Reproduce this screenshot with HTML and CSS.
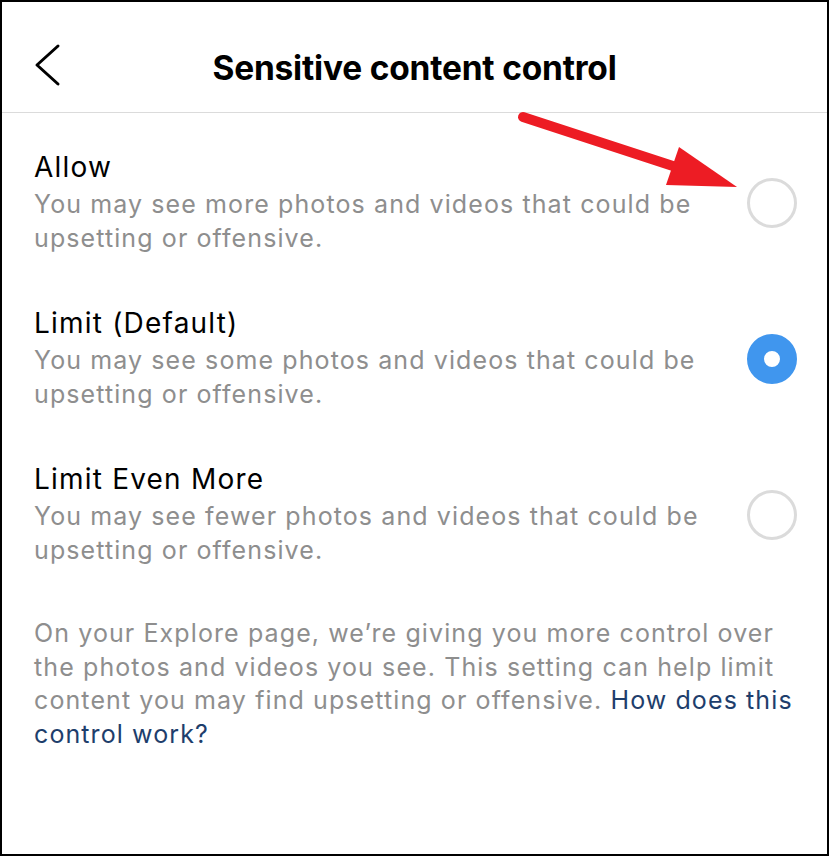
FILE: index.html
```html
<!DOCTYPE html>
<html lang="en">
<head>
<meta charset="utf-8">
<title>Sensitive content control</title>
<link rel="stylesheet" href="styles.css">
</head>
<body>
<div class="frame">
  <header class="topbar">
    <div class="back">
      <svg width="32" height="48" viewBox="0 0 32 48"><polyline points="25,5 4,24 25,43" fill="none" stroke="#000" stroke-width="3" stroke-linecap="round" stroke-linejoin="round"/></svg>
    </div>
    <h1 class="title">Sensitive content control</h1>
    <div></div>
  </header>
  <main class="options">
    <div class="option">
      <div class="text">
        <div class="label">Allow</div>
        <div class="desc">You may see more photos and videos that could be upsetting or offensive.</div>
      </div>
      <span class="radio"></span>
    </div>
    <div class="option">
      <div class="text">
        <div class="label">Limit (Default)</div>
        <div class="desc">You may see some photos and videos that could be upsetting or offensive.</div>
      </div>
      <span class="radio checked"></span>
    </div>
    <div class="option">
      <div class="text">
        <div class="label">Limit Even More</div>
        <div class="desc">You may see fewer photos and videos that could be upsetting or offensive.</div>
      </div>
      <span class="radio"></span>
    </div>
  </main>
  <p class="note">On your Explore page, we’re giving you more control over the photos and videos you see. This setting can help limit content you may find upsetting or offensive. <a class="link" href="#">How does this control work?</a></p>
  <svg class="arrow" width="240" height="100" viewBox="0 0 240 100">
    <line x1="14" y1="17" x2="170" y2="68" stroke="#ed1c24" stroke-width="10" stroke-linecap="round"/>
    <polygon points="170,47 228,87 157,85" fill="#ed1c24"/>
  </svg>
</div>
</body>
</html>
```

FILE: styles.css
```css
html, body {
  margin: 0;
  padding: 0;
  background: #fff;
}
.frame {
  position: relative;
  width: 829px;
  height: 856px;
  box-sizing: border-box;
  border: 2px solid #000;
  font-family: Inter, "Liberation Sans", sans-serif;
  color: #000;
  overflow: hidden;
}
.topbar {
  display: grid;
  grid-template-columns: 1fr auto 1fr;
  align-items: center;
  height: 111px;
  box-sizing: border-box;
  padding-top: 22px;
  border-bottom: 1px solid #dbdbdb;
}
.back {
  padding-left: 31px;
  display: flex;
  align-items: center;
  margin-top: -6px;
}
.back svg {
  display: block;
}
.title {
  margin: 0;
  font-size: 33.5px;
  font-weight: 700;
  line-height: 40px;
  letter-spacing: -0.2px;
}
.options {
  display: flex;
  flex-direction: column;
  gap: 51px;
  padding: 37px 30px 0 32px;
}
.option {
  display: flex;
  align-items: center;
  gap: 20px;
}
.text {
  flex: 1;
  min-width: 0;
}
.label {
  font-size: 28px;
  line-height: 34px;
  letter-spacing: 1.2px;
  margin-bottom: 3px;
}
.desc {
  font-size: 25px;
  line-height: 34px;
  letter-spacing: 1.1px;
  color: #8e8e8e;
}
.radio {
  flex: none;
  width: 50px;
  height: 50px;
  box-sizing: border-box;
  border-radius: 50%;
  border: 3px solid #dbdbdb;
}
.radio.checked {
  border: 17px solid #4096ee;
  background: #fff;
}
.note {
  margin: 50px 0 0;
  padding: 0 24px 0 32px;
  font-size: 25px;
  line-height: 33.5px;
  letter-spacing: 1.1px;
  color: #8e8e8e;
}
.link {
  color: #1e3e6c;
  text-decoration: none;
}
.arrow {
  position: absolute;
  left: 507px;
  top: 98px;
}
```
